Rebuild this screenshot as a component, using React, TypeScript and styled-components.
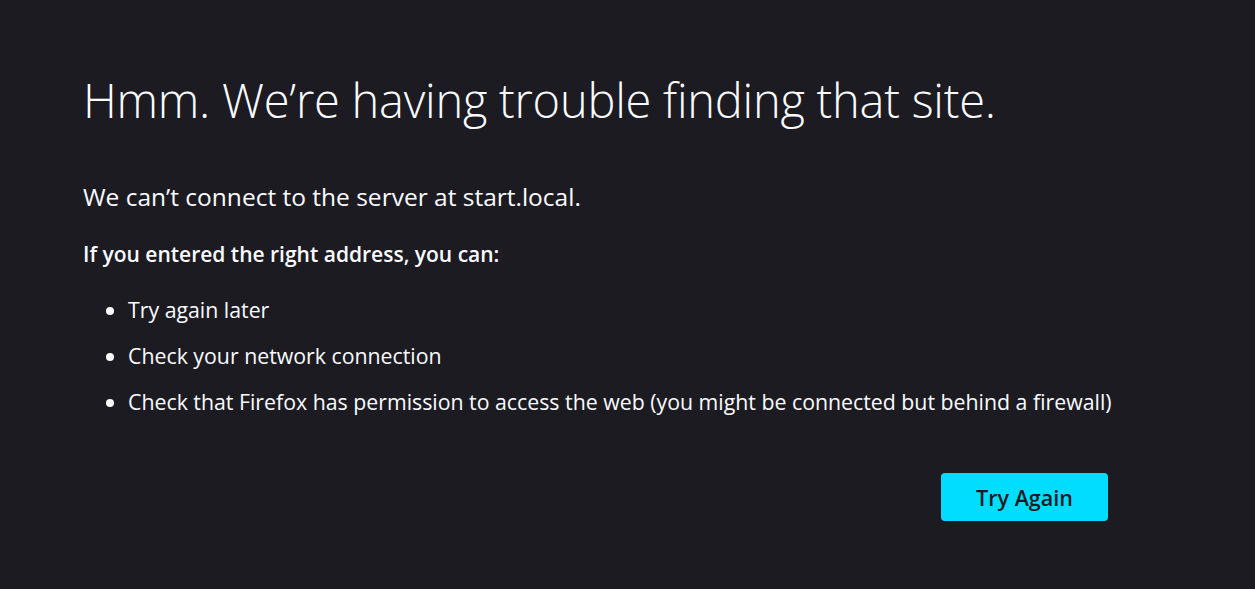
import React from "react";
import styled, { createGlobalStyle } from "styled-components";

const Global = createGlobalStyle`
  html, body { margin: 0; padding: 0; background: #1c1b22; }
  body { font-family: "Open Sans", "Noto Sans", sans-serif; color: #fbfbfe; }
  * { box-sizing: border-box; }
`;

const Page = styled.main`
  min-height: 589px;
  padding: 68px 0 0 83px;
`;

const Container = styled.div`
  width: 1025px;
  display: flex;
  flex-direction: column;
`;

const Title = styled.h1`
  margin: 0;
  font-size: 47px;
  font-weight: 300;
  line-height: 64px;
  letter-spacing: -0.24px;
`;

const Lead = styled.p`
  margin: 49px 0 0;
  font-size: 24.5px;
  font-weight: 400;
  line-height: 32px;
`;

const Sub = styled.p`
  margin: 27px 0 0;
  font-size: 21px;
  font-weight: 600;
  line-height: 28px;
`;

const List = styled.ul`
  margin: 28px 0 0;
  padding-left: 45px;
  display: flex;
  flex-direction: column;
  gap: 18px;
  font-size: 21.3px;
  line-height: 28px;
`;

const Item = styled.li`
  white-space: nowrap;
`;

const Actions = styled.div`
  display: flex;
  justify-content: flex-end;
  margin-top: 57px;
`;

const Button = styled.button`
  width: 167px;
  height: 48px;
  border: none;
  border-radius: 4px;
  background: #00ddff;
  color: #1c1b22;
  font-family: "Open Sans", "Noto Sans", sans-serif;
  font-size: 21.5px;
  font-weight: 600;
  cursor: pointer;
`;

export default function App() {
  return (
    <>
      <Global />
      <Page>
        <Container>
          <Title>Hmm. We’re having trouble finding that site.</Title>
          <Lead>We can’t connect to the server at start.local.</Lead>
          <Sub>If you entered the right address, you can:</Sub>
          <List>
            <Item>Try again later</Item>
            <Item>Check your network connection</Item>
            <Item>Check that Firefox has permission to access the web (you might be connected but behind a firewall)</Item>
          </List>
          <Actions>
            <Button>Try Again</Button>
          </Actions>
        </Container>
      </Page>
    </>
  );
}
